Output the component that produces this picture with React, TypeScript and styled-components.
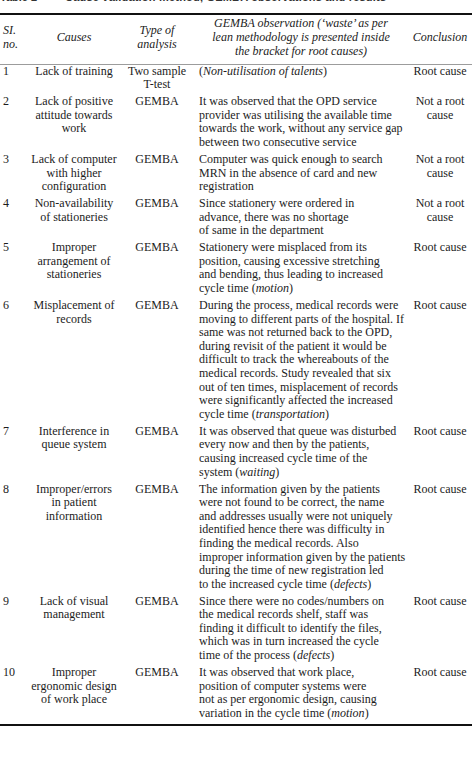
import React from "react";
import styled, { createGlobalStyle } from "styled-components";

const GlobalStyle = createGlobalStyle`
  html, body {
    margin: 0;
    padding: 0;
    background: #ffffff;
  }
  body {
    font-family: "Liberation Serif", "Times New Roman", serif;
    color: #1c1c1c;
  }
`;

const Page = styled.div`
  width: 472px;
`;

const CaptionStrip = styled.div`
  height: 3px;
  overflow: hidden;
  display: flex;
  align-items: flex-end;
  gap: 28px;
  font-size: 12px;
  line-height: 12px;
  color: #333;
`;

const CaptionLabel = styled.span`
  font-weight: bold;
  white-space: nowrap;
  font-family: "Liberation Sans", Arial, sans-serif;
  font-size: 11px;
`;

const CaptionText = styled.span`
  font-weight: bold;
  white-space: nowrap;
  font-family: "Liberation Sans", Arial, sans-serif;
  font-size: 11px;
  letter-spacing: 0.2px;
`;

const Table = styled.table`
  margin-top: 10px;
  width: 472px;
  border-collapse: collapse;
  table-layout: fixed;
  border-top: 2px solid #111;
  border-bottom: 2px solid #111;
  font-size: 12px;
`;

const HeadCell = styled.th<{ $align?: "left" | "center" }>`
  font-style: italic;
  font-weight: normal;
  text-align: ${(p) => p.$align ?? "center"};
  vertical-align: middle;
  line-height: 14.2px;
  padding: 1px 0 5px ${(p) => (p.$align === "left" ? "3px" : "0")};
  border-bottom: 1px solid #9c9c9c;
  white-space: nowrap;
  color: #1c1c1c;
`;

const Cell = styled.td<{ $align?: "left" | "center"; $pad?: number }>`
  text-align: ${(p) => p.$align ?? "center"};
  vertical-align: top;
  line-height: 13.6px;
  padding: 0 0 3.4px ${(p) => p.$pad ?? 0}px;
  white-space: nowrap;
  color: #1c1c1c;
`;

const Em = styled.em`
  font-style: italic;
`;

type Row = {
  no: string;
  cause: string[];
  type: string[];
  obs: string[];
  conclusion: string[];
};

const rows: Row[] = [
  {
    no: "1",
    cause: ["Lack of training"],
    type: ["Two sample", "T-test"],
    obs: ["(*Non-utilisation of talents*)"],
    conclusion: ["Root cause"],
  },
  {
    no: "2",
    cause: ["Lack of positive", "attitude towards", "work"],
    type: ["GEMBA"],
    obs: [
      "It was observed that the OPD service",
      "provider was utilising the available time",
      "towards the work, without any service gap",
      "between two consecutive service",
    ],
    conclusion: ["Not a root", "cause"],
  },
  {
    no: "3",
    cause: ["Lack of computer", "with higher", "configuration"],
    type: ["GEMBA"],
    obs: [
      "Computer was quick enough to search",
      "MRN in the absence of card and new",
      "registration",
    ],
    conclusion: ["Not a root", "cause"],
  },
  {
    no: "4",
    cause: ["Non-availability", "of stationeries"],
    type: ["GEMBA"],
    obs: [
      "Since stationery were ordered in",
      "advance, there was no shortage",
      "of same in the department",
    ],
    conclusion: ["Not a root", "cause"],
  },
  {
    no: "5",
    cause: ["Improper", "arrangement of", "stationeries"],
    type: ["GEMBA"],
    obs: [
      "Stationery were misplaced from its",
      "position, causing excessive stretching",
      "and bending, thus leading to increased",
      "cycle time (*motion*)",
    ],
    conclusion: ["Root cause"],
  },
  {
    no: "6",
    cause: ["Misplacement of", "records"],
    type: ["GEMBA"],
    obs: [
      "During the process, medical records were",
      "moving to different parts of the hospital. If",
      "same was not returned back to the OPD,",
      "during revisit of the patient it would be",
      "difficult to track the whereabouts of the",
      "medical records. Study revealed that six",
      "out of ten times, misplacement of records",
      "were significantly affected the increased",
      "cycle time (*transportation*)",
    ],
    conclusion: ["Root cause"],
  },
  {
    no: "7",
    cause: ["Interference in", "queue system"],
    type: ["GEMBA"],
    obs: [
      "It was observed that queue was disturbed",
      "every now and then by the patients,",
      "causing increased cycle time of the",
      "system (*waiting*)",
    ],
    conclusion: ["Root cause"],
  },
  {
    no: "8",
    cause: ["Improper/errors", "in patient", "information"],
    type: ["GEMBA"],
    obs: [
      "The information given by the patients",
      "were not found to be correct, the name",
      "and addresses usually were not uniquely",
      "identified hence there was difficulty in",
      "finding the medical records. Also",
      "improper information given by the patients",
      "during the time of new registration led",
      "to the increased cycle time (*defects*)",
    ],
    conclusion: ["Root cause"],
  },
  {
    no: "9",
    cause: ["Lack of visual", "management"],
    type: ["GEMBA"],
    obs: [
      "Since there were no codes/numbers on",
      "the medical records shelf, staff was",
      "finding it difficult to identify the files,",
      "which was in turn increased the cycle",
      "time of the process (*defects*)",
    ],
    conclusion: ["Root cause"],
  },
  {
    no: "10",
    cause: ["Improper", "ergonomic design", "of work place"],
    type: ["GEMBA"],
    obs: [
      "It was observed that work place,",
      "position of computer systems were",
      "not as per ergonomic design, causing",
      "variation in the cycle time (*motion*)",
    ],
    conclusion: ["Root cause"],
  },
];

function renderSegments(line: string) {
  const parts = line.split("*");
  return parts.map((part, i) =>
    i % 2 === 1 ? <Em key={i}>{part}</Em> : <React.Fragment key={i}>{part}</React.Fragment>
  );
}

function Lines({ lines }: { lines: string[] }) {
  return (
    <>
      {lines.map((l, i) => (
        <React.Fragment key={i}>
          {i > 0 && <br />}
          {renderSegments(l)}
        </React.Fragment>
      ))}
    </>
  );
}

export default function App() {
  return (
    <Page>
      <GlobalStyle />
      <CaptionStrip>
        <CaptionLabel>Table 2</CaptionLabel>
        <CaptionText>Cause validation method, GEMBA observations and results</CaptionText>
      </CaptionStrip>
      <Table>
        <colgroup>
          <col style={{ width: 28 }} />
          <col style={{ width: 92 }} />
          <col style={{ width: 74 }} />
          <col style={{ width: 214 }} />
          <col style={{ width: 64 }} />
        </colgroup>
        <thead>
          <tr>
            <HeadCell $align="left">
              SI.
              <br />
              no.
            </HeadCell>
            <HeadCell>Causes</HeadCell>
            <HeadCell>
              Type of
              <br />
              analysis
            </HeadCell>
            <HeadCell>
              GEMBA observation (‘waste’ as per
              <br />
              lean methodology is presented inside
              <br />
              the bracket for root causes)
            </HeadCell>
            <HeadCell>Conclusion</HeadCell>
          </tr>
        </thead>
        <tbody>
          {rows.map((r) => (
            <tr key={r.no}>
              <Cell $align="left" $pad={3}>
                {r.no}
              </Cell>
              <Cell>
                <Lines lines={r.cause} />
              </Cell>
              <Cell>
                <Lines lines={r.type} />
              </Cell>
              <Cell $align="left" $pad={5}>
                <Lines lines={r.obs} />
              </Cell>
              <Cell>
                <Lines lines={r.conclusion} />
              </Cell>
            </tr>
          ))}
        </tbody>
      </Table>
    </Page>
  );
}
